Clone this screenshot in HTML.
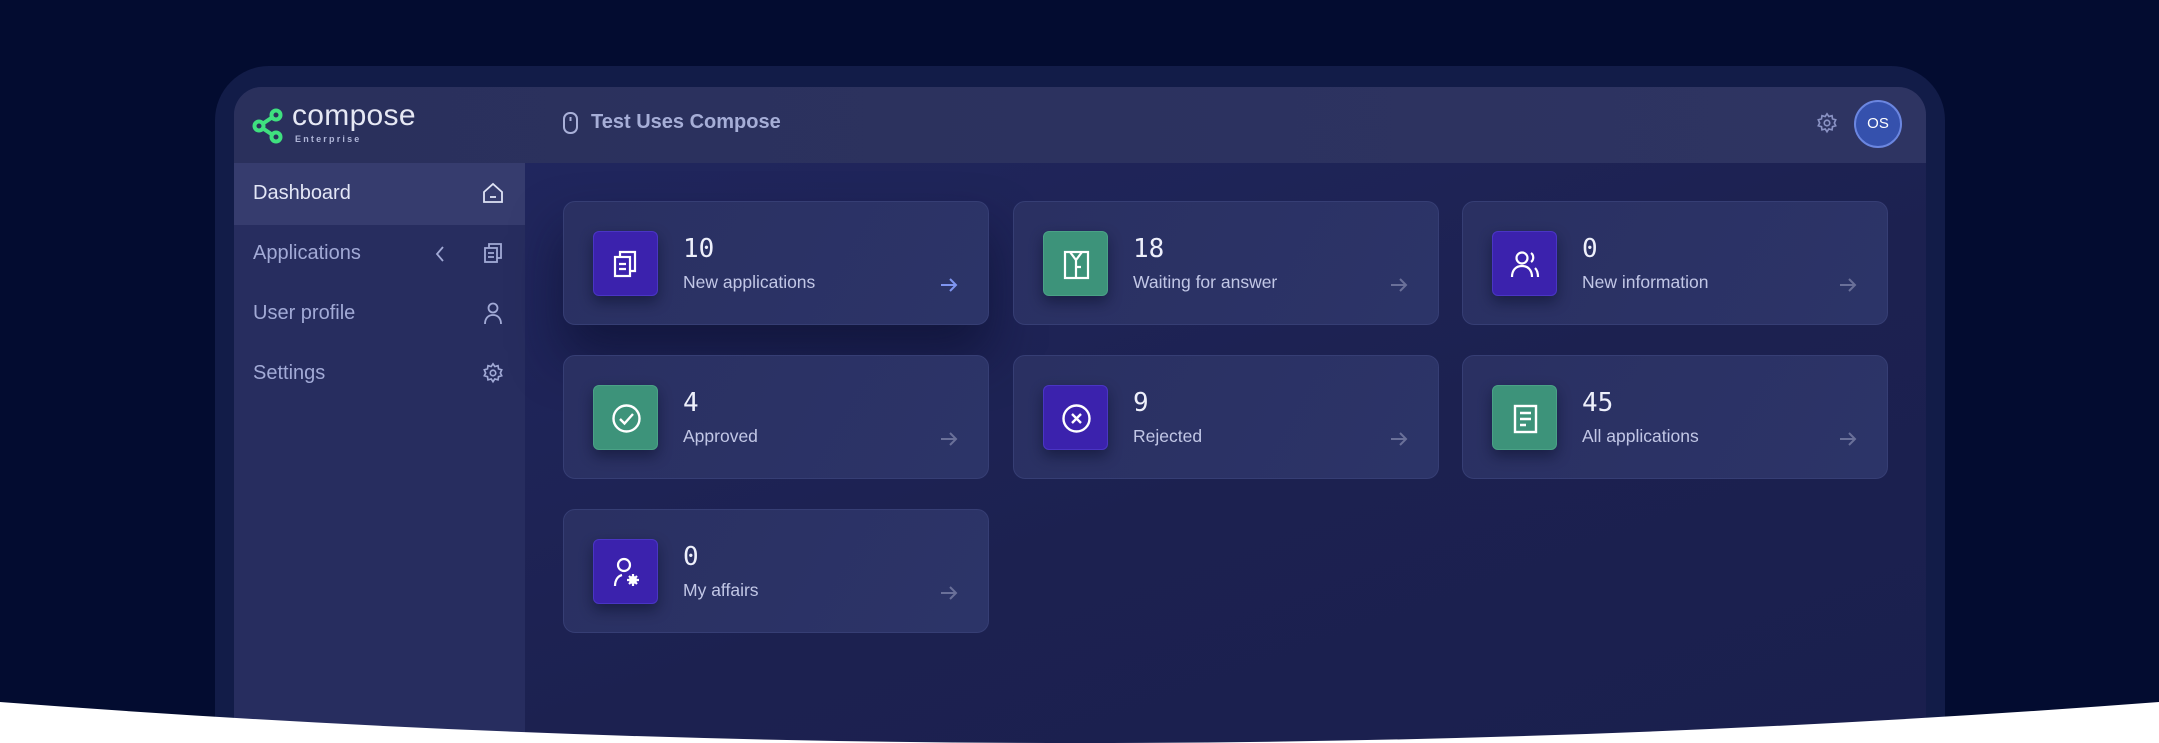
<!DOCTYPE html>
<html><head><meta charset="utf-8"><style>
*{margin:0;padding:0;box-sizing:border-box}
html,body{width:2159px;height:743px;overflow:hidden}
body{background:#030c30;font-family:"Liberation Sans",sans-serif;position:relative}
.outer{position:absolute;left:215px;top:66px;width:1730px;height:677px;border-radius:54px 54px 0 0;background:#121c48}
.panel{position:absolute;left:234px;top:87px;width:1692px;height:656px;border-radius:28px 28px 0 0;overflow:hidden;background:linear-gradient(160deg,#222862,#1c2150 60%,#1a1f4e)}
.header{position:absolute;left:0;top:0;width:100%;height:76px;background:linear-gradient(90deg,#2a305c,#2e3462)}
.side{position:absolute;left:0;top:76px;width:291px;height:600px;background:#272d5f}
.item{position:absolute;left:0;width:291px;height:62px;color:#a2aad6;font-size:20px;line-height:60px;padding-left:19px}
.item.active{background:#363c6e;color:#e3e6f6}
.item svg{position:absolute;top:19px}
.card{position:absolute;width:426px;height:124px;border-radius:12px;background:linear-gradient(120deg,#2a3062,#2c3468);border:1px solid #363e74}
.ib{position:absolute;left:29px;top:29px;width:65px;height:65px;border-radius:6px;box-shadow:0 6px 14px rgba(5,8,30,.45)}
.ib.p{background:#3b22ad;border:1px solid #4a35c4}.ib.g{background:#3d937a;border:1px solid #4aa286}
.ib svg{position:absolute;left:16px;top:16px}
.num{position:absolute;left:119px;top:32px;font-family:"DejaVu Sans Mono","Liberation Mono",monospace;font-size:26px;color:#eef0fb}
.lab{position:absolute;left:119px;top:70px;font-size:17.5px;color:#c2c7e6}
.arr{position:absolute;left:375px;top:74px}
</style></head><body>
<div class="outer"></div>
<div class="panel">
 <div class="header">
  <svg style="position:absolute;left:18px;top:20px" width="32" height="38" viewBox="0 0 32 38" fill="none" stroke="#3fe07f" stroke-width="4"><circle cx="7" cy="19" r="4.5"/><circle cx="24" cy="8" r="4.5"/><circle cx="24" cy="30" r="4.5"/><path d="M11 16.5l9-6M11 21.5l9 6"/></svg>
  <div style="position:absolute;left:58px;top:12px;font-size:30px;color:#e6e8f4;letter-spacing:0.3px">compose</div>
  <div style="position:absolute;left:61px;top:47px;font-size:9px;color:#b0b6d8;letter-spacing:2.2px;font-weight:bold">Enterprise</div>
  <svg style="position:absolute;left:328px;top:24px" width="17" height="24" viewBox="0 0 17 24" fill="none" stroke="#a9b0d8" stroke-width="2"><rect x="2" y="2" width="13" height="20" rx="6"/><path d="M8.5 6v4"/></svg>
  <div style="position:absolute;left:357px;top:24px;font-size:20px;font-weight:bold;color:#a6aed7">Test Uses Compose</div>
  <svg style="position:absolute;left:1582px;top:25px" width="22" height="22" viewBox="0 0 24 24" fill="none" stroke="#8a92c4" stroke-width="1.8"><circle cx="12" cy="12" r="3"/><path d="M12 2l2 3 3.5-1 .5 3.5 3.5 1-1.5 3.5 1.5 3-3.5 1-.5 3.5-3.5-1-2 3-2-3-3.5 1-.5-3.5-3.5-1 1.5-3-1.5-3.5 3.5-1 .5-3.5 3.5 1z"/></svg>
  <div style="position:absolute;left:1620px;top:13px;width:48px;height:48px;border-radius:50%;background:#3551ad;border:2px solid #6b86e0;color:#fff;font-size:15px;text-align:center;line-height:44px">OS</div>
 </div>
 <div class="side">
  <div class="item active" style="top:0">Dashboard<svg style="left:248px" width="22" height="22" viewBox="0 0 22 22" fill="none" stroke="#dfe3f5" stroke-width="1.8"><path d="M2 10L11 2l9 8v10H2z"/><path d="M8 15h6"/></svg></div>
  <div class="item" style="top:60px">Applications<svg style="left:200px;top:22px" width="12" height="18" viewBox="0 0 12 18" fill="none" stroke="#a2aad6" stroke-width="1.8"><path d="M9 2L3 9l6 7"/></svg><svg style="left:249px" width="20" height="22" viewBox="0 0 20 22" fill="none" stroke="#a2aad6" stroke-width="1.8"><rect x="2" y="6" width="12" height="14"/><path d="M6 6V2h12v14h-4M5 11h6M5 15h6"/></svg></div>
  <div class="item" style="top:120px">User profile<svg style="left:249px" width="20" height="24" viewBox="0 0 20 24" fill="none" stroke="#a2aad6" stroke-width="1.8"><circle cx="10" cy="6" r="4.5"/><path d="M2 22c0-6 3.5-9 8-9s8 3 8 9"/></svg></div>
  <div class="item" style="top:180px">Settings<svg style="left:248px" width="22" height="22" viewBox="0 0 24 24" fill="none" stroke="#a2aad6" stroke-width="1.8"><circle cx="12" cy="12" r="3"/><path d="M12 2l2 3 3.5-1 .5 3.5 3.5 1-1.5 3.5 1.5 3-3.5 1-.5 3.5-3.5-1-2 3-2-3-3.5 1-.5-3.5-3.5-1 1.5-3-1.5-3.5 3.5-1 .5-3.5 3.5 1z"/></svg></div>
 </div>
</div>

<div class="card" style="left:563px;top:201px;box-shadow:0 30px 50px rgba(10,14,45,.6)"><div class="ib p"><svg width="33" height="33" viewBox="0 0 33 33" fill="none" stroke="#fff" stroke-width="2.2"><rect x="5" y="9" width="15" height="19"/><path d="M10 9V4h15v19h-5M9 16h7M9 21h7"/></svg></div><div class="num">10</div><div class="lab">New applications</div><svg class="arr" width="20" height="18" viewBox="0 0 20 18" fill="none" stroke="#7f95f0" stroke-width="2"><path d="M2 9h15M11 3l6 6-6 6"/></svg></div>
<div class="card" style="left:1013px;top:201px"><div class="ib g"><svg width="33" height="33" viewBox="0 0 33 33" fill="none" stroke="#fff" stroke-width="2.2"><rect x="5" y="4" width="23" height="26"/><path d="M10 4l6 8 6-8M16 12v18M16 19h5"/></svg></div><div class="num">18</div><div class="lab">Waiting for answer</div><svg class="arr" width="20" height="18" viewBox="0 0 20 18" fill="none" stroke="#6a7099" stroke-width="2"><path d="M2 9h15M11 3l6 6-6 6"/></svg></div>
<div class="card" style="left:1462px;top:201px"><div class="ib p"><svg width="33" height="33" viewBox="0 0 33 33" fill="none" stroke="#fff" stroke-width="2.2"><circle cx="13" cy="10" r="5.5"/><path d="M3 29c0-7 4-11 10-11s10 4 10 11M22 5c3 2 3 7 0 9M26 20c2 2 3 5 3 9"/></svg></div><div class="num">0</div><div class="lab">New information</div><svg class="arr" width="20" height="18" viewBox="0 0 20 18" fill="none" stroke="#6a7099" stroke-width="2"><path d="M2 9h15M11 3l6 6-6 6"/></svg></div>

<div class="card" style="left:563px;top:355px"><div class="ib g"><svg width="33" height="33" viewBox="0 0 33 33" fill="none" stroke="#fff" stroke-width="2.4"><circle cx="16.5" cy="16.5" r="13"/><path d="M10 17l4.5 4.5L23 12"/></svg></div><div class="num">4</div><div class="lab">Approved</div><svg class="arr" width="20" height="18" viewBox="0 0 20 18" fill="none" stroke="#6a7099" stroke-width="2"><path d="M2 9h15M11 3l6 6-6 6"/></svg></div>
<div class="card" style="left:1013px;top:355px"><div class="ib p"><svg width="33" height="33" viewBox="0 0 33 33" fill="none" stroke="#fff" stroke-width="2.4"><circle cx="16.5" cy="16.5" r="13"/><path d="M12 12l9 9M21 12l-9 9"/></svg></div><div class="num">9</div><div class="lab">Rejected</div><svg class="arr" width="20" height="18" viewBox="0 0 20 18" fill="none" stroke="#6a7099" stroke-width="2"><path d="M2 9h15M11 3l6 6-6 6"/></svg></div>
<div class="card" style="left:1462px;top:355px"><div class="ib g"><svg width="33" height="33" viewBox="0 0 33 33" fill="none" stroke="#fff" stroke-width="2.4"><rect x="6" y="4" width="21" height="26"/><path d="M11 11h11M11 17h11M11 23h6"/></svg></div><div class="num">45</div><div class="lab">All applications</div><svg class="arr" width="20" height="18" viewBox="0 0 20 18" fill="none" stroke="#6a7099" stroke-width="2"><path d="M2 9h15M11 3l6 6-6 6"/></svg></div>

<div class="card" style="left:563px;top:509px"><div class="ib p"><svg width="33" height="33" viewBox="0 0 33 33" fill="none" stroke="#fff" stroke-width="2.2"><circle cx="14" cy="9" r="6"/><path d="M5 30c0-6 3-10 7-11"/><circle cx="23" cy="24" r="3" fill="#fff"/><path d="M23 18v2M23 28v2M17 24h2M27 24h2M19 20l1.5 1.5M25.5 26.5L27 28M19 28l1.5-1.5M25.5 21.5L27 20"/></svg></div><div class="num">0</div><div class="lab">My affairs</div><svg class="arr" width="20" height="18" viewBox="0 0 20 18" fill="none" stroke="#6a7099" stroke-width="2"><path d="M2 9h15M11 3l6 6-6 6"/></svg></div>

<svg style="position:absolute;left:0;top:0" width="2159" height="743"><path d="M0 702 Q1080 784 2159 702 L2159 743 L0 743Z" fill="#fff"/></svg>
</body></html>
